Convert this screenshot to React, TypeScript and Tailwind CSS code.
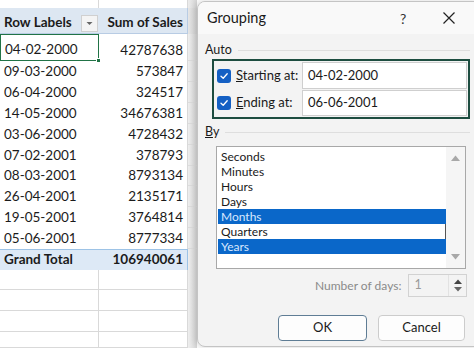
import React from 'react';

const rows: [string, string][] = [
  ['04-02-2000', '42787638'],
  ['09-03-2000', '573847'],
  ['06-04-2000', '324517'],
  ['14-05-2000', '34676381'],
  ['03-06-2000', '4728432'],
  ['07-02-2001', '378793'],
  ['08-03-2001', '8793134'],
  ['26-04-2001', '2135171'],
  ['19-05-2001', '3764814'],
  ['05-06-2001', '8777334'],
];

const units = ['Seconds', 'Minutes', 'Hours', 'Days', 'Months', 'Quarters', 'Years'];
const selected = ['Months', 'Years'];

const Check: React.FC = () => (
  <div className="w-[14px] h-[14px] rounded-[3px] bg-[#1460c4] flex items-center justify-center shrink-0">
    <svg width="10" height="10" viewBox="0 0 10 10">
      <path d="M2 5.2 L4.2 7.3 L8.2 2.8" fill="none" stroke="#ffffff" strokeWidth="1.3" strokeLinecap="round" strokeLinejoin="round" />
    </svg>
  </div>
);

const Sheet: React.FC = () => {
  return (
    <div className="w-[197px] shrink-0 h-[348px] flex flex-col bg-white font-['Lato',sans-serif] text-[13.5px] text-[#1b1b1b]">
      {/* top strip */}
      <div className="flex h-[8px]">
        <div className="w-[99px] border-r border-[#d9d9d9]"></div>
        <div className="w-[89px] border-r border-[#d9d9d9]"></div>
        <div className="flex-1 bg-gradient-to-r from-[#ececec] to-[#d6d6d6]"></div>
      </div>
      {/* header */}
      <div className="flex h-[26px]">
        <div className="w-[99px] bg-[#dde7f2] border-b border-[#b8cce4] flex items-center pt-[3px] pl-[4px] font-bold relative">
          <span>Row Labels</span>
          <div className="absolute left-[81px] top-[7px] w-[17px] h-[17px] bg-[#f4f4f4] border border-[#d0d0d0] flex items-center justify-center">
            <svg width="7" height="5" viewBox="0 0 7 5">
              <path d="M0.5 1 L6.5 1 L3.5 4 Z" fill="#666666" />
            </svg>
          </div>
        </div>
        <div className="w-[89px] bg-[#dde7f2] border-b border-r border-[#b8cce4] flex items-center justify-end pt-[3px] pr-[4px] font-bold">
          Sum of Sales
        </div>
        <div className="flex-1 bg-gradient-to-r from-[#e6e6e6] to-[#d2d2d2]"></div>
      </div>
      {/* data rows */}
      {rows.map(([d, v], i) => (
        <div key={d} className={`flex ${i === 0 ? 'h-[27px]' : 'h-[21px]'}`}>
          <div className={`w-[99px] flex items-end pb-[2px] pl-[4px] leading-[17px] relative ${i === 0 ? 'border-[1.5px] border-[#217346]' : ''}`}>
            {d}
            {i === 0 && <div className="absolute right-[-3px] bottom-[-3px] w-[5px] h-[5px] bg-[#217346] border border-white"></div>}
          </div>
          <div className="w-[89px] border-r border-[#d9d9d9] flex items-end justify-end pb-[2px] pr-[4px] leading-[17px]">{v}</div>
          <div className="flex-1 bg-gradient-to-r from-[#eeeeee] to-[#d6d6d6] border-b border-[#dcdcdc]"></div>
        </div>
      ))}
      {/* grand total */}
      <div className="flex h-[21px]">
        <div className="w-[99px] bg-[#dde9f6] border-t border-[#9dc3e6] flex items-end pb-[2px] pl-[4px] leading-[17px] font-bold">Grand Total</div>
        <div className="w-[89px] bg-[#dde9f6] border-t border-r border-[#9dc3e6] flex items-end justify-end pb-[2px] pr-[4px] leading-[17px] font-bold">106940061</div>
        <div className="flex-1 bg-gradient-to-r from-[#eeeeee] to-[#d6d6d6]"></div>
      </div>
      {[20, 21, 21, 16].map((h, i) => (
        <div key={i} className="flex" style={{ height: h }}>
          <div className="w-[99px] border-r border-b border-[#d9d9d9]"></div>
          <div className="w-[89px] border-r border-b border-[#d9d9d9]"></div>
          <div className="flex-1 bg-gradient-to-r from-[#eeeeee] to-[#d6d6d6]"></div>
        </div>
      ))}
    </div>
  );
};

const Dialog: React.FC = () => {
  return (
    <div className="w-[282px] shrink-0 h-[346px] mt-[1px] bg-[#f3f3f3] border border-[#c4c4c4] rounded-l-[8px] overflow-hidden flex flex-col font-['Lato',sans-serif] text-[#1a1a1a] shadow-[-2px_0_6px_rgba(0,0,0,0.15)]">
      {/* title bar */}
      <div className="h-[32px] shrink-0 bg-[#f9f9f9] flex items-center pl-[9px] text-[14.5px]">
        <span>Grouping</span>
        <span className="ml-[134px] text-[14px] text-[#333]">?</span>
        <svg className="ml-[36px]" width="14" height="14" viewBox="0 0 14 14">
          <path d="M1.5 1.5 L12.5 12.5 M12.5 1.5 L1.5 12.5" stroke="#222" strokeWidth="1.2" />
        </svg>
      </div>

      {/* Auto */}
      <div className="h-[16px] mt-[8px] flex items-center pl-[7px] pr-[8px] text-[12.5px]">
        <span>Auto</span>
        <div className="flex-1 ml-[6px] h-px bg-[#dedede]"></div>
      </div>

      <div className="mt-[1px] ml-[14px] w-[258px] h-[60px] border-2 border-[#1d4d40] p-[1px] flex flex-col gap-[1px]">
        <div className="flex items-center h-[27px]">
          <div className="w-[87px] flex items-center pl-[2px] gap-[5px] text-[13px]">
            <Check />
            <span><span className="underline">S</span>tarting at:</span>
          </div>
          <div className="flex-1 h-full bg-white border border-[#cfcfcf] flex items-center pl-[5px] text-[13px]">04-02-2000</div>
        </div>
        <div className="flex items-center h-[26px]">
          <div className="w-[87px] flex items-center pl-[2px] gap-[5px] text-[13px]">
            <Check />
            <span><span className="underline">E</span>nding at:</span>
          </div>
          <div className="flex-1 h-full bg-white border border-[#cfcfcf] flex items-center pl-[5px] text-[13px]">06-06-2001</div>
        </div>
      </div>

      {/* By */}
      <div className="h-[16px] mt-[5px] flex items-center pl-[7px] pr-[8px] text-[12.5px]">
        <span><span className="underline">B</span>y</span>
        <div className="flex-1 ml-[6px] h-px bg-[#dedede]"></div>
      </div>

      <div className="mt-[6px] ml-[18px] w-[250px] h-[123px] bg-white border border-[#a8a8a8] flex">
        <div className="flex-1 pt-[2px] pl-px">
          {units.map((u) => {
            const sel = selected.includes(u);
            return (
              <div
                key={u}
                className={`h-[15px] flex items-center pl-[3px] text-[12px] ${sel ? 'bg-[#0a67c9] text-[#d8e8ff]' : ''} ${u === 'Quarters' ? 'border-r border-[#555]' : ''}`}
              >
                {u}
              </div>
            );
          })}
        </div>
        <div className="w-[19px] bg-[#f5f5f5] flex flex-col items-center justify-between py-[8px]">
          <svg width="9" height="6" viewBox="0 0 9 6">
            <path d="M0 6 L4.5 0.5 L9 6 Z" fill="#a8a8a8" />
          </svg>
          <svg width="9" height="6" viewBox="0 0 9 6">
            <path d="M0 0 L4.5 5.5 L9 0 Z" fill="#a8a8a8" />
          </svg>
        </div>
      </div>

      {/* number of days */}
      <div className="mt-[5px] h-[23px] flex items-center">
        <span className="ml-[117px] text-[12px] text-[#8a8a8a]">Number of days:</span>
        <div className="ml-[7px] w-[59px] h-[23px] bg-[#f3f3f3] border border-[#d2d2d2] flex">
          <div className="flex-1 flex items-center pl-[5px] text-[12.5px] text-[#9a9a9a]">1</div>
          <div className="w-[18px] flex flex-col items-center justify-center gap-[3px] border-l border-[#e2e2e2]">
            <svg width="8" height="5" viewBox="0 0 8 5">
              <path d="M0 5 L4 0.5 L8 5 Z" fill="#444" />
            </svg>
            <svg width="8" height="5" viewBox="0 0 8 5">
              <path d="M0 0 L4 4.5 L8 0 Z" fill="#666" />
            </svg>
          </div>
        </div>
      </div>

      {/* buttons */}
      <div className="mt-[18px] flex gap-[11px] pl-[80px]">
        <div className="w-[89px] h-[26px] bg-[#fdfdfd] border-[1.5px] border-[#5f7d95] rounded-[4px] flex items-center justify-center text-[13px]">OK</div>
        <div className="w-[87px] h-[26px] bg-[#fdfdfd] border border-[#cccccc] rounded-[4px] flex items-center justify-center text-[13px]">Cancel</div>
      </div>
    </div>
  );
};

export default function App() {
  return (
    <div className="w-[474px] h-[348px] overflow-hidden flex bg-white">
      <Sheet />
      <Dialog />
    </div>
  );
}
